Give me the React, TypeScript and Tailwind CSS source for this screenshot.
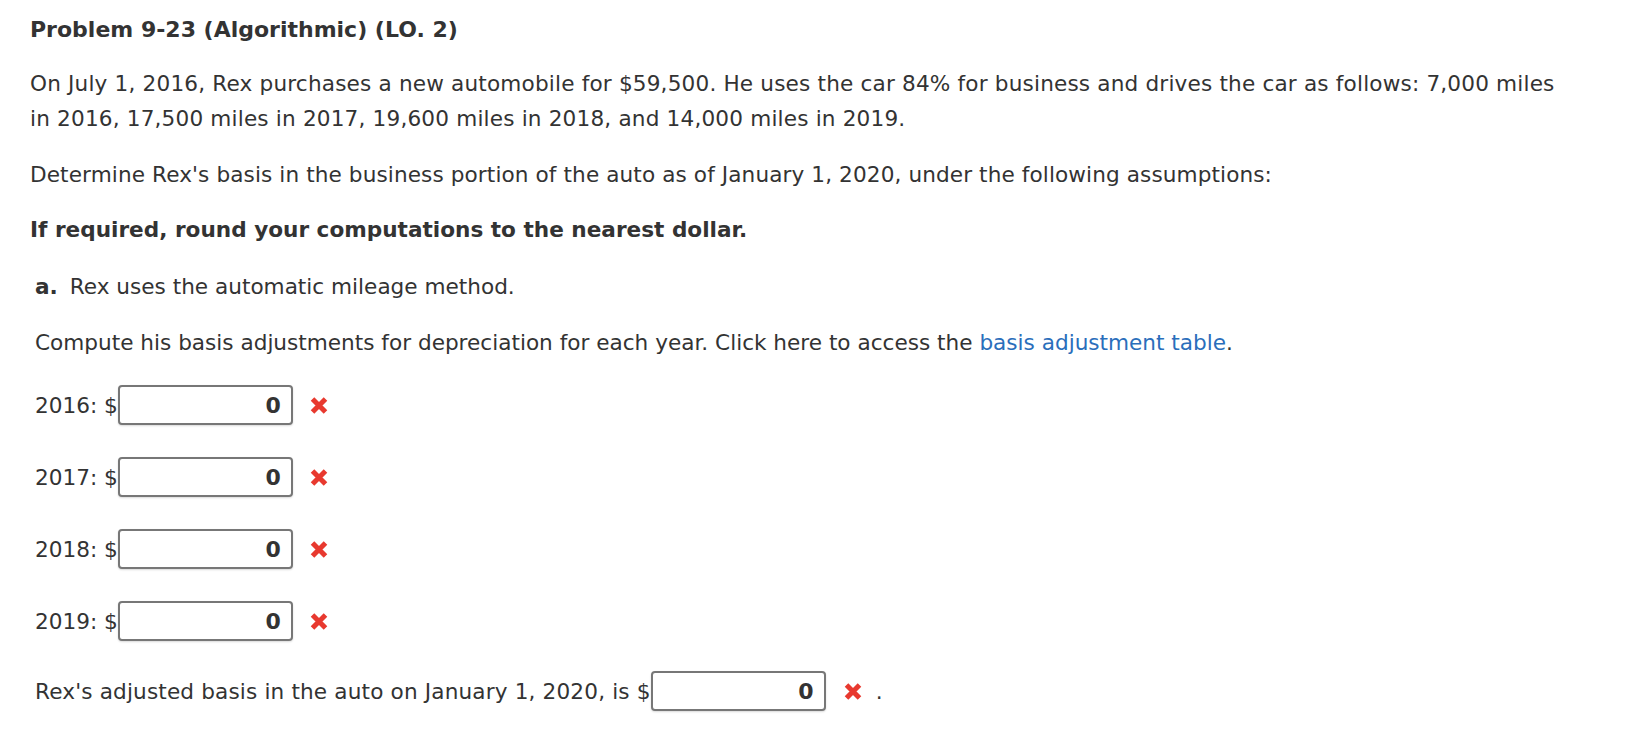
import React from "react";

const ROWS = ["2016", "2017", "2018", "2019"];

function RedX() {
  return (
    <svg width="18" height="17" viewBox="0 0 18 17" className="shrink-0">
      <path d="M2.5 2 L15.5 15 M15.5 2 L2.5 15" stroke="#e8392f" strokeWidth="5" strokeLinecap="butt" />
    </svg>
  );
}

function AnswerBox({ value = "0" }: { value?: string }) {
  return (
    <div className="flex h-[40px] w-[175px] items-center justify-end rounded-[4px] border-2 border-[#777] bg-white pr-[10px] text-[22px] font-bold text-[#333] shadow-[0_1px_2px_rgba(0,0,0,0.15)]">
      {value}
    </div>
  );
}

export default function App() {
  return (
    <div className="min-h-[730px] w-[1626px] bg-white pl-[30px] pt-[12px] font-['DejaVu_Sans',Verdana,sans-serif] text-[21.6px] leading-[35px] text-[#333]">
      <h1 className="text-[22px] font-bold">Problem 9-23 (Algorithmic) (LO. 2)</h1>

      <p className="mt-[19px] w-[1540px] tracking-[0.17px]">
        On July 1, 2016, Rex purchases a new automobile for $59,500. He uses the car 84% for business and drives
        the car as follows: 7,000 miles in 2016, 17,500 miles in 2017, 19,600 miles in 2018, and 14,000 miles in
        2019.
      </p>

      <p className="mt-[21px] tracking-[0.1px]">
        Determine Rex's basis in the business portion of the auto as of January 1, 2020, under the following
        assumptions:
      </p>

      <p className="mt-[20px] font-bold">If required, round your computations to the nearest dollar.</p>

      <div className="pl-[5px]">
        <p className="mt-[22px]">
          <span className="font-bold">a.</span>
          <span className="ml-[12px]">Rex uses the automatic mileage method.</span>
        </p>

        <p className="mt-[21px]">
          Compute his basis adjustments for depreciation for each year. Click here to access the{" "}
          <a className="text-[#2a6ebb]">basis adjustment table</a>.
        </p>

        <div className="mt-[25px] flex flex-col gap-[32px]">
          {ROWS.map((year) => (
            <div key={year} className="flex items-center">
              <span>{year}: $</span>
              <AnswerBox />
              <span className="ml-[17px]">
                <RedX />
              </span>
            </div>
          ))}
        </div>

        <div className="mt-[30px] flex items-center">
          <span className="tracking-[0.15px]">Rex's adjusted basis in the auto on January 1, 2020, is $</span>
          <AnswerBox />
          <span className="ml-[18px]">
            <RedX />
          </span>
          <span className="ml-[14px]">.</span>
        </div>
      </div>
    </div>
  );
}
